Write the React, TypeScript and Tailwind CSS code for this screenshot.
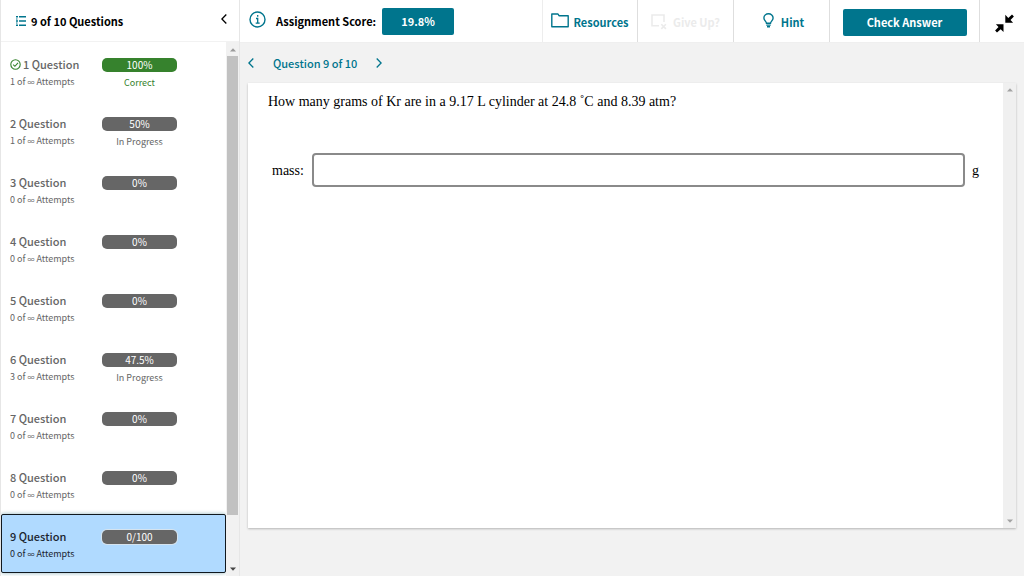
import React from "react";

type Question = {
  id: number;
  attempts: number;
  score: string;
  status?: string;
  correct?: boolean;
  current?: boolean;
};

const questions: Question[] = [
  { id: 1, attempts: 1, score: "100%", status: "Correct", correct: true },
  { id: 2, attempts: 1, score: "50%", status: "In Progress" },
  { id: 3, attempts: 0, score: "0%" },
  { id: 4, attempts: 0, score: "0%" },
  { id: 5, attempts: 0, score: "0%" },
  { id: 6, attempts: 3, score: "47.5%", status: "In Progress" },
  { id: 7, attempts: 0, score: "0%" },
  { id: 8, attempts: 0, score: "0%" },
  { id: 9, attempts: 0, score: "0/100", current: true },
];

function Chevron({ dir, className }: { dir: "left" | "right"; className: string }) {
  return (
    <svg viewBox="0 0 6 10" className={className} fill="none" stroke="currentColor" strokeWidth="1.3" aria-hidden="true">
      <path d={dir === "left" ? "M5.3 0.5 0.9 5l4.4 4.5" : "M0.7 0.5 5.1 5 0.7 9.5"} />
    </svg>
  );
}

function ListIcon() {
  return (
    <svg viewBox="0 0 10 10" className="h-[10px] w-[10px] shrink-0 text-[#00758d]" fill="currentColor" aria-hidden="true">
      <path d="M0 0h2v1.5H0zM3 0h7v1.5H3zM0 2.4h1.5v1H0zM0 4.2h2v1.5H0zM3 4.2h7v1.5H3zM0 6.5h1.5v1H0zM0 8.4h2v1.5H0zM3 8.4h7v1.5H3z" />
    </svg>
  );
}

function CheckCircle() {
  return (
    <svg viewBox="0 0 11 11" className="h-[11px] w-[11px] shrink-0 text-[#36822d]" fill="none" stroke="currentColor" strokeWidth="1.1" aria-hidden="true">
      <circle cx="5.5" cy="5.5" r="4.7" />
      <path d="M3.2 5.6 4.9 7.3 8 3.8" />
    </svg>
  );
}

function Triangle({ up, className }: { up?: boolean; className: string }) {
  return (
    <svg viewBox="0 0 6 4" className={`h-[4px] w-[6px] ${className}`} fill="currentColor" aria-hidden="true">
      <path d={up ? "M3 0.3 6 3.6H0z" : "M0 0.4h6L3 3.7z"} />
    </svg>
  );
}

function QuestionRow({ q }: { q: Question }) {
  return (
    <li>
      <button
        type="button"
        aria-current={q.current ? "true" : undefined}
        className={`flex h-[59px] w-full items-start border pt-[11px] pl-2 text-left ${
          q.current
            ? "rounded-xs border-[#10181f] bg-[#b0daff] text-[#1b2530] shadow-[0_0_4px_#8fb5bd]"
            : "border-transparent text-[#666]"
        }`}
      >
        <span className="flex w-[92px] flex-col">
          <span className="flex h-5 items-center gap-[2px] whitespace-nowrap text-[11px] leading-5 font-medium">
            {q.correct && <CheckCircle />}
            {q.id} Question
          </span>
          <span className="h-4 text-[9px] leading-4 whitespace-nowrap">
            {q.attempts} of <span className="text-[7px]">∞</span> Attempts
          </span>
        </span>
        <span className="flex w-[75px] flex-col items-center pt-1">
          <span
            className={`flex h-[14px] w-full items-center justify-center rounded-[5px] text-[10px] leading-[14px] text-white ${
              q.correct ? "bg-[#36822d]" : "bg-[#666]"
            } ${q.current ? "ring-1 ring-[#d5e3ee]" : ""}`}
          >
            {q.score}
          </span>
          {q.status && (
            <span className={`pt-[3px] text-[9px] leading-4 ${q.correct ? "text-[#36822d]" : ""}`}>{q.status}</span>
          )}
        </span>
      </button>
    </li>
  );
}

export default function App() {
  return (
    <div className="flex h-screen overflow-hidden bg-[#f2f2f2] font-['Noto_Sans_CJK_SC',sans-serif] text-black">
      <aside className="flex w-[240px] shrink-0 flex-col border-x border-[#e6e6e6] bg-white">
        <div className="flex h-[42px] shrink-0 items-center justify-between border-b border-[#f2f2f2] pr-3 pl-[15px]">
          <h2 className="flex items-center gap-[5px] text-[11px] leading-5 font-bold">
            <ListIcon />
            9 of 10 Questions
          </h2>
          <button type="button" aria-label="Collapse question list" className="pb-1">
            <Chevron dir="left" className="h-[10px] w-[6px]" />
          </button>
        </div>
        <div className="flex min-h-0 flex-1">
          <ul className="min-w-0 flex-1 overflow-hidden">
            {questions.map((q) => (
              <QuestionRow key={q.id} q={q} />
            ))}
          </ul>
          <div className="flex w-[13px] shrink-0 flex-col items-center bg-[#f1f1f1] pt-[6px] pb-[5px]" aria-hidden="true">
            <Triangle up className="text-[#9a9a9a]" />
            <div className="mt-1 mb-[52px] w-[11px] flex-1 bg-[#c1c1c1]" />
            <Triangle className="text-[#444]" />
          </div>
        </div>
      </aside>

      <main className="flex min-w-0 flex-1 flex-col">
        <header className="flex h-[43px] shrink-0 border-b border-[#efefef] bg-white text-[11px] leading-5 font-bold">
          <div className="flex flex-1 items-center pl-[9px]">
            <svg viewBox="0 0 17 17" className="mb-[3px] h-[17px] w-[17px] text-[#00758d]" fill="none" stroke="currentColor" strokeWidth="1.4" aria-hidden="true">
              <circle cx="8.5" cy="8.5" r="7.5" />
              <path d="M8.7 3.9v1.8M7 7.5h1.7v4.6M6.7 12.2h4" strokeWidth="1.3" />
            </svg>
            <span className="ml-[10px] whitespace-nowrap">Assignment Score:</span>
            <span className="ml-[6px] flex h-[27px] w-[72px] items-center justify-center rounded-xs bg-[#00758d] text-white">
              19.8%
            </span>
          </div>
          <button type="button" className="flex w-[95px] items-center justify-center gap-1 border-l border-[#ededed] pt-[2px] text-[#00758d]">
            <svg viewBox="0 0 18 15" className="mb-1 h-[15px] w-[18px]" fill="none" stroke="currentColor" strokeWidth="1.4" strokeLinejoin="round" aria-hidden="true">
              <path d="M0.8 13.8V1h6.2l1 1.7h9.2v11.1z" />
            </svg>
            Resources
          </button>
          <button type="button" disabled className="flex w-[96px] items-center justify-center gap-[6px] border-l border-[#dedede] pt-[2px] text-[#ebebeb]">
            <svg viewBox="0 0 16 16" className="h-[16px] w-[16px]" fill="none" stroke="currentColor" strokeWidth="1.6" aria-hidden="true">
              <path d="M8 11.8H1V1h12v7M10.3 10.3l4.6 4.6M14.9 10.3l-4.6 4.6" />
            </svg>
            Give Up?
          </button>
          <button type="button" className="flex w-[96px] items-center justify-center gap-[7px] border-l border-[#dedede] pt-[2px] pl-1 text-[#00758d]">
            <svg viewBox="0 0 11 15" className="mb-1 h-[15px] w-[11px]" fill="none" stroke="currentColor" strokeWidth="1.4" aria-hidden="true">
              <path d="M3.5 10.3C3.5 8.4 0.9 7.6 0.9 4.9a4.6 4.2 0 0 1 9.2 0c0 2.7-2.6 3.5-2.6 5.4z" />
              <path d="M3.3 12.1h4.4M4 13.7h3" />
            </svg>
            Hint
          </button>
          <div className="flex w-[150px] items-center justify-center border-l border-[#dedede] pt-[2px]">
            <button type="button" className="h-[27px] w-[124px] rounded-xs bg-[#00758d] text-white">
              Check Answer
            </button>
          </div>
          <button type="button" aria-label="Exit full screen" className="flex w-[45px] items-center justify-center border-l border-[#dedede] pt-1 pl-1">
            <svg viewBox="0 0 19 19" className="h-[19px] w-[19px]" fill="black" aria-hidden="true">
              <path d="M10.3 0.8v7.9h7.8l-2.6-2.6L18.9 2.6 17 0.6 13.3 3.9zM8.5 10.3H0.9l2.6 2.6L0.1 16.4 2 18.5 5.7 15.2 8.5 18.1z" />
            </svg>
          </button>
        </header>

        <nav className="flex h-10 shrink-0 items-center pl-2 text-[11px] leading-5 font-medium text-[#00758d]">
          <button type="button" aria-label="Previous question">
            <Chevron dir="left" className="h-[10px] w-[6px]" />
          </button>
          <span className="mx-[19px]">Question 9 of 10</span>
          <button type="button" aria-label="Next question">
            <Chevron dir="right" className="h-[10px] w-[6px]" />
          </button>
        </nav>

        <section className="mr-2 mb-12 ml-2 flex min-h-0 flex-1 bg-white font-['Liberation_Serif',serif] text-[14px] leading-5 shadow-[0_1px_2px_#b5b5b5]">
          <div className="min-w-0 flex-1 pt-[9px] pr-6 pl-5">
            <p>How many grams of Kr are in a 9.17 L cylinder at 24.8 ˚C and 8.39 atm?</p>
            <div className="mt-[41px] flex items-center pl-1">
              <label htmlFor="mass" className="pt-[2px]">mass:</label>
              <input
                id="mass"
                type="text"
                className="mr-[7px] ml-2 h-[34px] min-w-0 flex-1 rounded-[4px] border-2 border-[#8a8a8a] bg-white px-2 outline-none"
              />
              <span className="pt-[2px]">g</span>
            </div>
          </div>
          <div className="flex w-[13px] shrink-0 flex-col items-center justify-between bg-[#f0f0f0] pt-[5px] pb-[5px]" aria-hidden="true">
            <Triangle up className="text-[#a3a3a3]" />
            <Triangle className="text-[#a3a3a3]" />
          </div>
        </section>
      </main>
    </div>
  );
}
